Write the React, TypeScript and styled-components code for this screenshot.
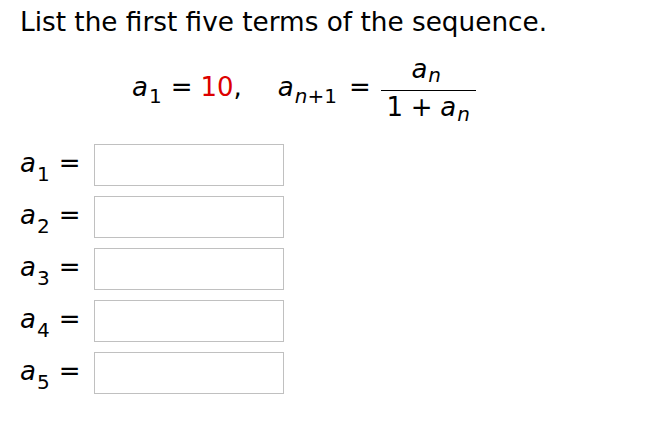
import React from "react";
import styled, { createGlobalStyle } from "styled-components";

const Global = createGlobalStyle`
  html, body { margin: 0; padding: 0; background: #fff; }
  body { font-family: "DejaVu Sans", Verdana, sans-serif; color: #000; }
`;

const Page = styled.div`
  padding: 7px 0 0 20px;
  display: flex;
  flex-direction: column;
`;

const Title = styled.h1`
  margin: 0;
  font-weight: normal;
  font-size: 26.3px;
  line-height: 30px;
`;

const Equation = styled.div`
  margin: 17px 0 0 112px;
  font-size: 26px;
  line-height: 30px;
  white-space: nowrap;
`;

const Var = styled.i`
  font-style: italic;
`;

const Sub = styled.sub<{ $drop: number }>`
  font-size: 20px;
  line-height: 0;
  vertical-align: -${(p) => p.$drop}px;
  margin-left: 1px;
`;

const Eq = styled.span<{ $l: number; $r: number }>`
  margin: 0 ${(p) => p.$r}px 0 ${(p) => p.$l}px;
`;

const Red = styled.span`
  color: #dd0000;
`;

const Comma = styled.span`
  margin-right: 36px;
`;

const Fraction = styled.span`
  display: inline-flex;
  flex-direction: column;
  align-items: center;
  vertical-align: middle;
  margin-left: 10px;
`;

const Numer = styled.span`
  display: block;
  padding: 0 4px 6px 0;
  height: 30px;
`;

const Bar = styled.span`
  display: block;
  width: 95px;
  height: 0;
  border-top: 1px solid #000;
`;

const Denom = styled.span`
  display: block;
  padding: 1px 0 0;
  height: 30px;
  word-spacing: -0.5px;
`;

const Rows = styled.div`
  margin-top: 22px;
  display: flex;
  flex-direction: column;
  gap: 10px;
`;

const Row = styled.div`
  display: flex;
  align-items: flex-start;
  height: 42px;
`;

const Label = styled.span`
  display: block;
  width: 74px;
  font-size: 26px;
  line-height: 38px;
  white-space: nowrap;
`;

const Box = styled.input`
  box-sizing: border-box;
  width: 190px;
  height: 42px;
  border: 1px solid #c0c0c0;
  border-radius: 0;
  background: #fff;
  margin: 0;
  padding: 0 6px;
  font-size: 16px;
  outline: none;
`;

export default function App() {
  return (
    <>
      <Global />
      <Page>
        <Title>List the first five terms of the sequence.</Title>
        <Equation>
          <Var>a</Var>
          <Sub $drop={7}>1</Sub>
          <Eq $l={9} $r={8}>=</Eq>
          <Red>10</Red>
          <Comma>,</Comma>
          <Var>a</Var>
          <Sub $drop={7}>
            <Var>n</Var>+1
          </Sub>
          <Eq $l={12} $r={0}>=</Eq>
          <Fraction>
            <Numer>
              <Var>a</Var>
              <Sub $drop={4}>
                <Var>n</Var>
              </Sub>
            </Numer>
            <Bar />
            <Denom>
              1 + <Var>a</Var>
              <Sub $drop={5}>
                <Var>n</Var>
              </Sub>
            </Denom>
          </Fraction>
        </Equation>
        <Rows>
          {[1, 2, 3, 4, 5].map((n) => (
            <Row key={n}>
              <Label>
                <Var>a</Var>
                <Sub $drop={9}>{n}</Sub>
                <Eq $l={9} $r={0}>=</Eq>
              </Label>
              <Box type="text" aria-label={`a${n}`} />
            </Row>
          ))}
        </Rows>
      </Page>
    </>
  );
}
